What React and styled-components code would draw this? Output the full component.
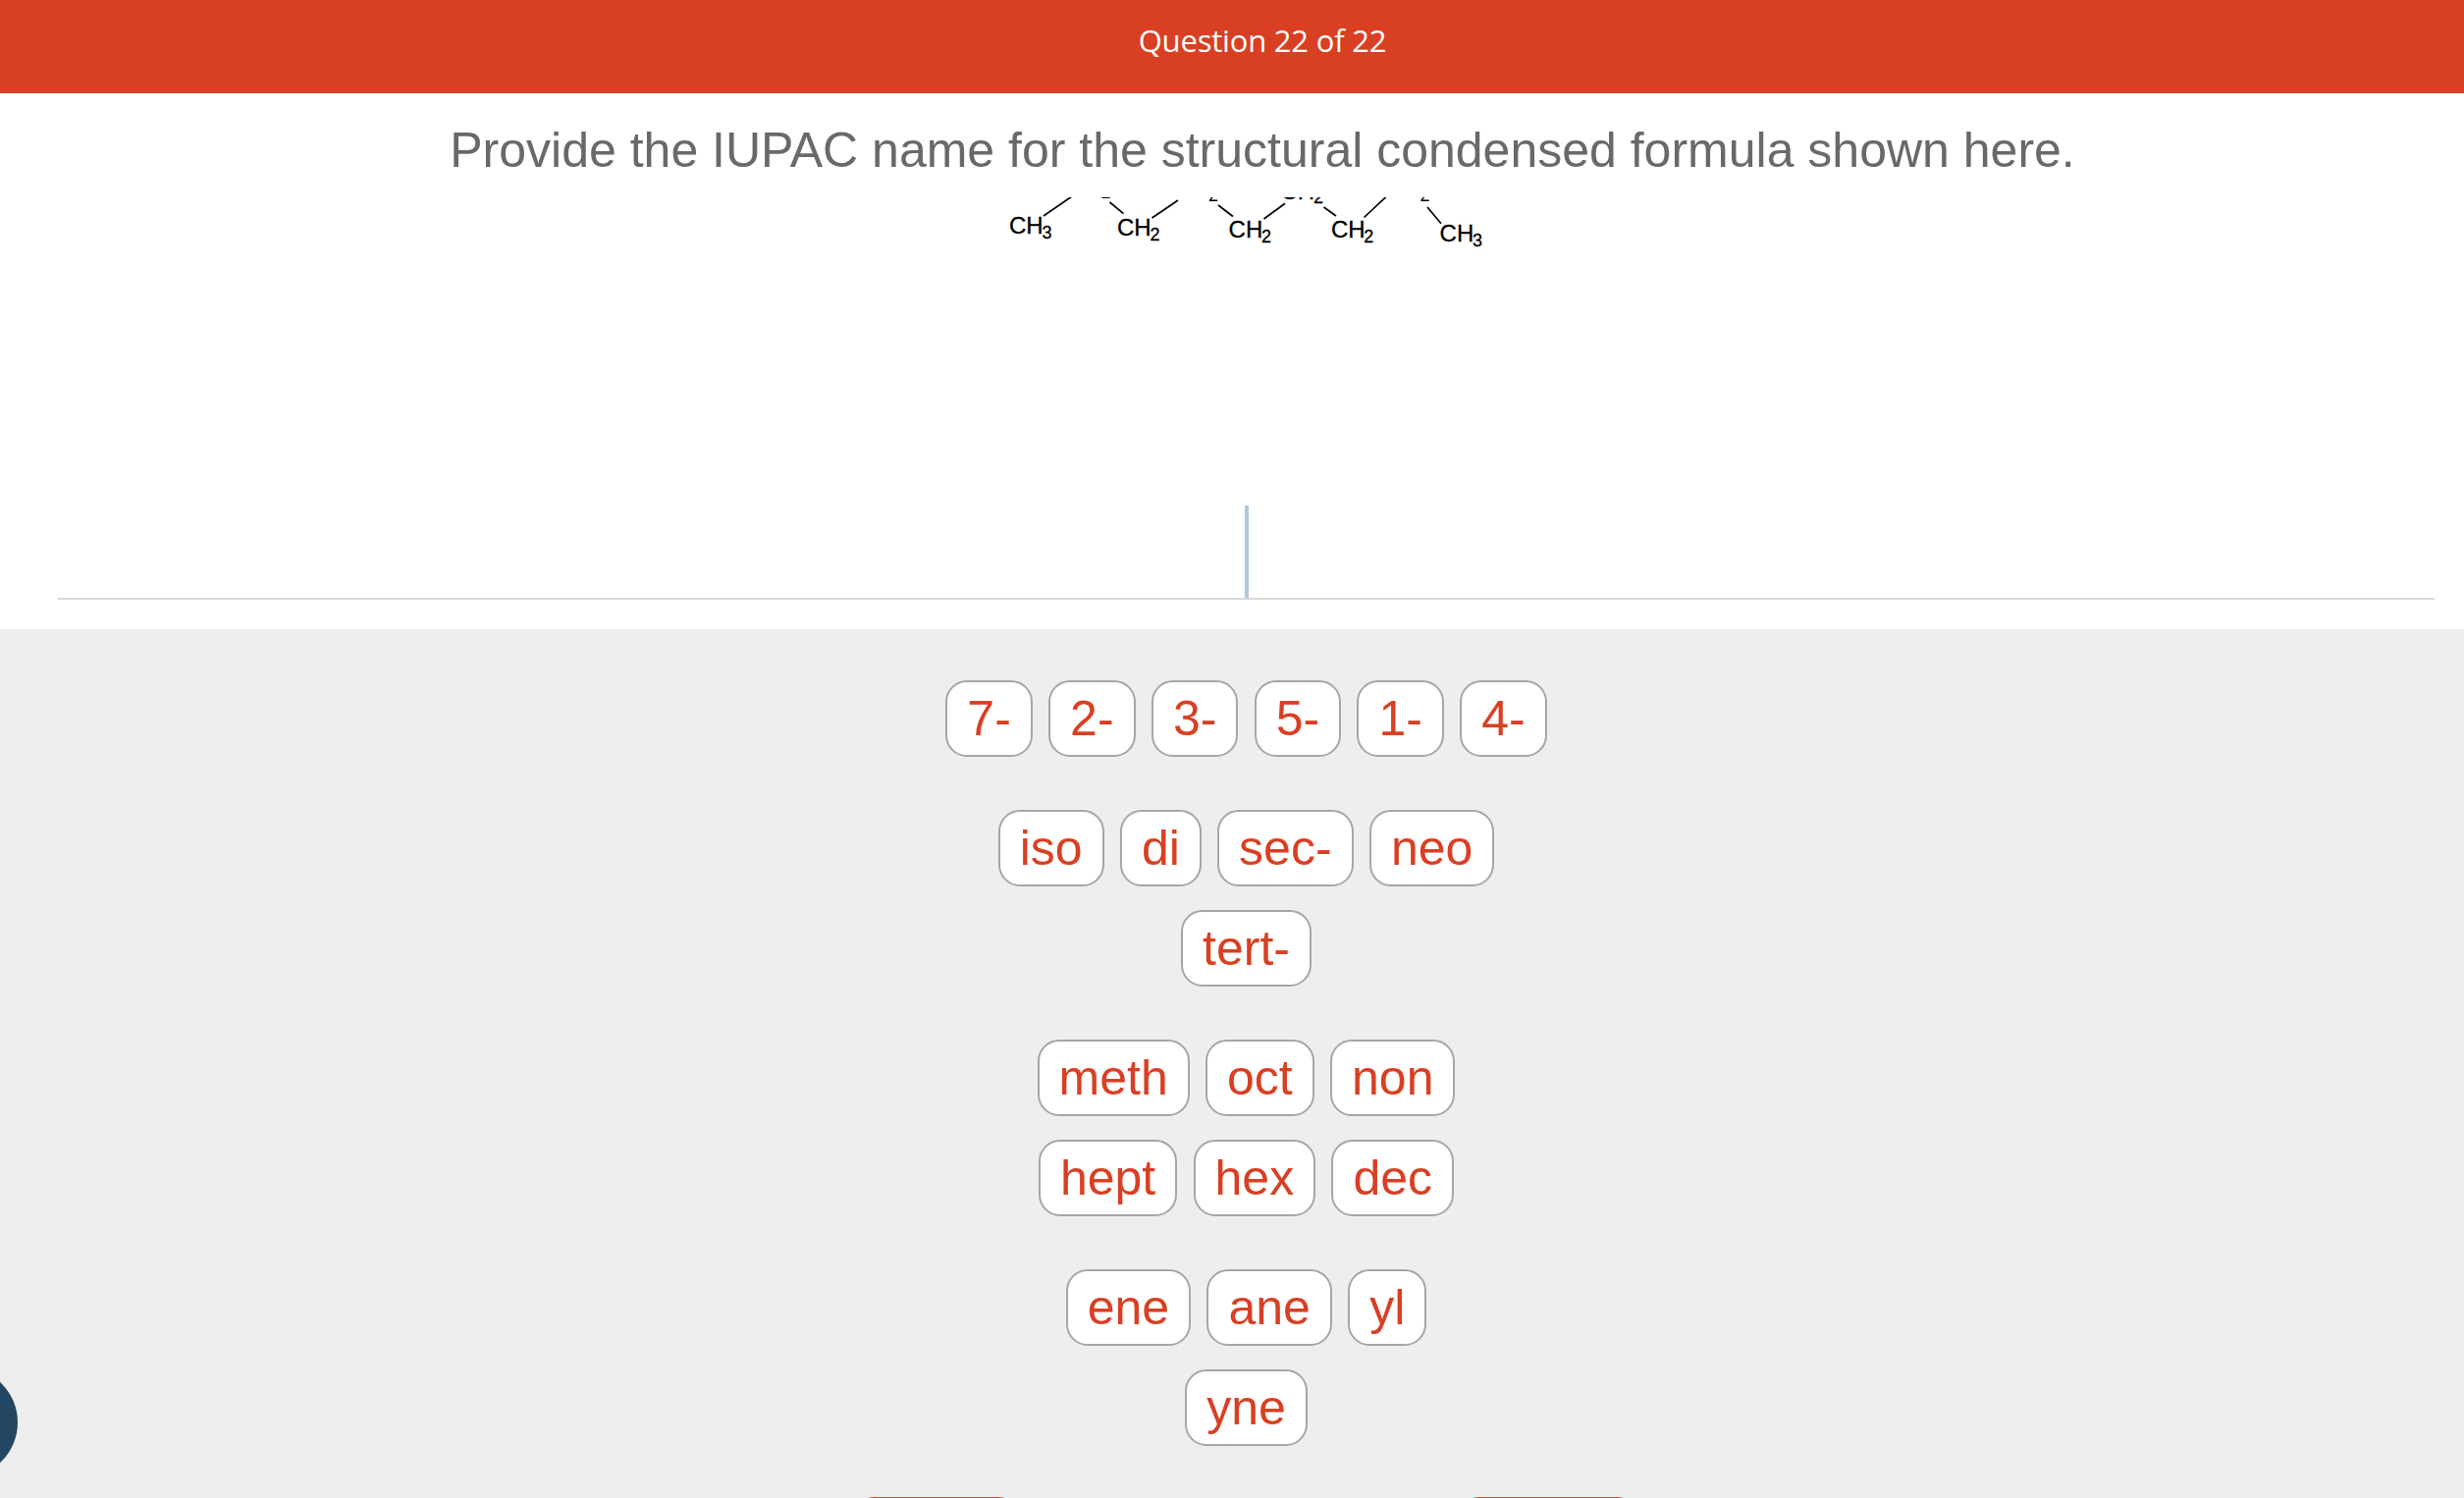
import React from "react";
import styled, { createGlobalStyle } from "styled-components";

const GlobalStyle = createGlobalStyle`
  * {
    box-sizing: border-box;
  }
  body {
    margin: 0;
    background-color: #eee;
    overflow: hidden;
  }
`;

const Container = styled.div`
  position: relative;
  display: flex;
  flex-direction: column;
  height: 1526px;
  overflow: hidden;
  font-family: "Liberation Sans", Arial, sans-serif;
  background-color: #eee;
`;
const Header = styled.header`
  flex: none;
  height: 95px;
  padding: 19px 0 0 62px;
  text-align: center;
  font-family: "Segoe UI", "Open Sans", sans-serif;
  font-size: 31px;
  line-height: 44px;
  letter-spacing: -0.2px;
  color: #fff;
  background-color: #d93f23;
`;
const Content = styled.main`
  flex: none;
  display: flex;
  flex-direction: column;
  height: 546px;
  background-color: #fff;
`;
const Prompt = styled.h1`
  height: 106px;
  margin: 0;
  padding: 29px 0 0 62px;
  text-align: center;
  font-size: 50px;
  font-weight: 400;
  line-height: 58px;
  color: #696969;
`;
const Formula = styled.svg`
  display: block;
  width: 500px;
  height: 60px;
  margin-left: 1020px;
  font-family: "Liberation Sans", Arial, sans-serif;
`;
const Answer = styled.div`
  display: flex;
  justify-content: center;
  height: 96px;
  margin: 254px 30px 0 59px;
  border-bottom: 2px solid #dadada;
`;
const Caret = styled.div`
  width: 4px;
  height: 94px;
  background-color: #b0c8de;
`;
const Bank = styled.section`
  flex: none;
  display: flex;
  flex-direction: column;
  gap: 54px;
  padding: 52px 31px 0 60px;
`;
const Group = styled.div`
  display: flex;
  flex-direction: column;
  gap: 24px;
`;
const Row = styled.div`
  display: flex;
  justify-content: center;
  gap: 16.3px;
`;
const Token = styled.button`
  height: 78px;
  padding: 0 20px;
  border: 2px solid #a6a6a6;
  border-radius: 22px;
  font-family: inherit;
  font-size: 50px;
  line-height: 74px;
  color: #d93f23;
  background-color: #fff;
`;
const Actions = styled.div`
  display: flex;
  flex: none;
  width: 800px;
  margin: 52px 0 0 869px;
  justify-content: space-between;
`;
const Action = styled.button`
  width: ${({ $width }) => $width}px;
  height: 78px;
  border: 2px solid #d93f23;
  border-radius: 22px;
  background-color: #d93f23;
`;
const Bubble = styled.div`
  position: absolute;
  left: -94px;
  top: 1393px;
  width: 112px;
  height: 112px;
  border-radius: 50%;
  background-color: #234663;
`;

const groups = [
  [["7-", "2-", "3-", "5-", "1-", "4-"]],
  [["iso", "di", "sec-", "neo"], ["tert-"]],
  [
    ["meth", "oct", "non"],
    ["hept", "hex", "dec"],
  ],
  [["ene", "ane", "yl"], ["yne"]],
];

// x, y = start of the baseline
const carbons = [
  { x: 1028, y: 238.3, h: 3 },
  { x: 1088, y: 197.6, h: 2 },
  { x: 1138, y: 240.2, h: 2 },
  { x: 1197.5, y: 200.4, h: 2 },
  { x: 1251.6, y: 242, h: 2 },
  { x: 1304.5, y: 202.5, h: 2 },
  { x: 1355.9, y: 242, h: 2 },
  { x: 1413, y: 200.4, h: 2 },
  { x: 1466.6, y: 246, h: 3 },
];
const bonds = [
  [1063, 220, 1092, 200],
  [1130.5, 206, 1144.5, 217.7],
  [1173.5, 222, 1200, 204],
  [1241, 209, 1256, 220.5],
  [1287.5, 223, 1309, 207.3],
  [1348.5, 211, 1361, 220],
  [1389.5, 221.5, 1412.5, 200],
  [1454, 211, 1468, 227.8],
];

const App = () => {
  return (
    <Container>
      <GlobalStyle />
      <Header>Question 22 of 22</Header>
      <Content>
        <Prompt>
          Provide the IUPAC name for the structural condensed formula shown
          here.
        </Prompt>
        <Formula viewBox="1020 201 500 60">
          {bonds.map(([x1, y1, x2, y2]) => (
            <line
              key={x1}
              x1={x1}
              y1={y1}
              x2={x2}
              y2={y2}
              stroke="#000"
              strokeWidth="1.7"
            />
          ))}
          {carbons.map(({ x, y, h }) => (
            <text
              key={x}
              x={x}
              y={y}
              fontSize="24"
              stroke="#000"
              strokeWidth={y > 202 ? 0.3 : 0}
            >
              CH
              <tspan x={x + 33.4} y={y + 4.8} fontSize="18">
                {h}
              </tspan>
            </text>
          ))}
        </Formula>
        <Answer>
          <Caret />
        </Answer>
      </Content>
      <Bank>
        {groups.map((rows, i) => (
          <Group key={i}>
            {rows.map((row) => (
              <Row key={row[0]}>
                {row.map((token) => (
                  <Token key={token}>{token}</Token>
                ))}
              </Row>
            ))}
          </Group>
        ))}
      </Bank>
      <Actions>
        <Action $width={170} />
        <Action $width={184} />
      </Actions>
      <Bubble />
    </Container>
  );
};

export default App;
